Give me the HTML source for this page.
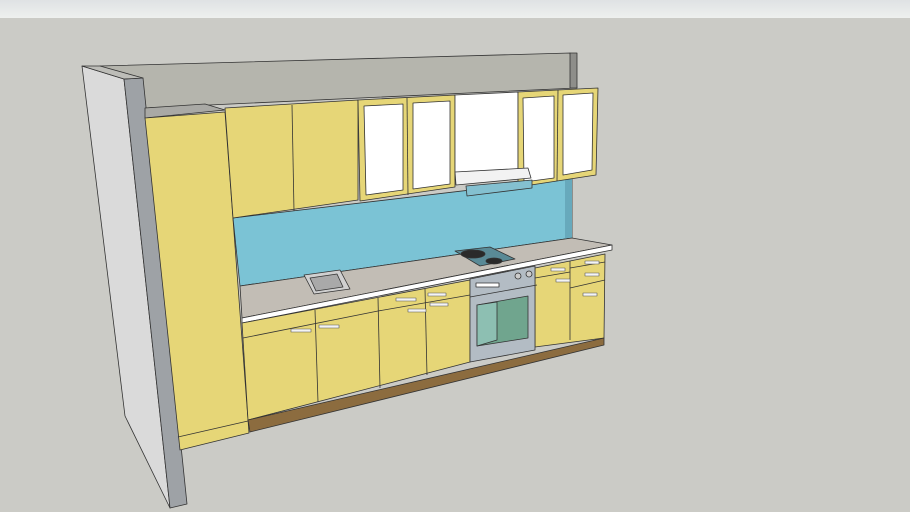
<!DOCTYPE html>
<html><head><meta charset="utf-8"><style>
html,body{margin:0;padding:0;width:910px;height:512px;overflow:hidden;background:#cbcbc6}
svg{display:block}
</style></head><body>
<svg width="910" height="512" viewBox="0 0 910 512" xmlns="http://www.w3.org/2000/svg" stroke-linejoin="round">
<defs><linearGradient id="sky" x1="0" y1="0" x2="0" y2="1"><stop offset="0" stop-color="#dfe2e4"/><stop offset="1" stop-color="#eef0ee"/></linearGradient></defs>
<rect x="0" y="0" width="910" height="18" fill="url(#sky)"/>
<rect x="0" y="18" width="910" height="494" fill="#cbcbc6"/>
<g stroke="#333" stroke-width="0.8">
<!-- soffit -->
<polygon points="100,66 570,53 577,88 145,108 124,80" fill="#b5b5ad"/>
<polygon points="570,53 577,53 577,88 570,88" fill="#8e8e8a"/>
<!-- left panel -->
<polygon points="82,66 124,79 170,508 125,416" fill="#dadada"/>
<polygon points="124,79 143,78 187,504 170,508" fill="#9ea2a6"/>
<polygon points="82,66 100,66 143,78 124,79" fill="#bdbdb8"/>
<!-- tall cabinet -->
<polygon points="145,108 205,104 225,110 145,118" fill="#a9a9a5"/>
<polygon points="145,118 225,112 249,433 180,450" fill="#e6d677"/>
<line x1="178" y1="437" x2="248" y2="421"/>
<!-- backsplash -->
<polygon points="233,218 572,178 572,238 240,286" fill="#7bc3d5"/>
<polygon points="565,179 572,178 572,238 565,238" fill="#67a9bc" stroke="none"/>
<!-- upper cabinets -->
<polygon points="225,108 358,100 358,200 233,218" fill="#e6d677"/>
<line x1="292" y1="105" x2="294" y2="211"/>
<polygon points="358,100 455,95 455,187 360,201" fill="#e6d677"/>
<polygon points="455,95 518,92 518,172 455,180" fill="#ffffff"/>
<polygon points="518,92 598,88 596,175 518,187" fill="#e6d677"/>
<line x1="407" y1="98" x2="408" y2="195"/>
<line x1="558" y1="90" x2="557" y2="181"/>
<polygon points="364,106 403,104 403,190 366,195" fill="#fff"/>
<polygon points="413,103 450,101 450,184 413,189" fill="#fff"/>
<polygon points="523,98 554,96 554,178 524,182" fill="#fff"/>
<polygon points="563,95 593,93 592,170 563,175" fill="#fff"/>
<!-- hood -->
<polygon points="455,172 528,168 531,178 456,185" fill="#f2f2f2"/>
<polygon points="466,186 532,180 532,188 467,196" fill="#84c0d0"/>
<!-- countertop -->
<polygon points="240,286 572,238 612,245 242,318" fill="#c2bdb5"/>
<polygon points="242,318 612,245 612,250 242,323" fill="#ffffff"/>
<!-- sink -->
<polygon points="304,275 340,270 350,289 314,294" fill="#d0d0d0"/>
<polygon points="310,278 337,274 343,287 316,291" fill="#a9a9a9"/>
<!-- hob -->
<polygon points="455,251 490,247 515,259 480,266" fill="#5a8a96"/>
<ellipse cx="473" cy="254" rx="12" ry="4" fill="#2a2a2a"/>
<ellipse cx="494" cy="261" rx="8" ry="3" fill="#2a2a2a"/>
<!-- base cabinets -->
<polygon points="242,323 470,280 470,362 248,420" fill="#e6d677"/>
<polygon points="535,268 605,254 604,338 535,347" fill="#e6d677"/>
<polygon points="248,420 604,338 604,345 250,432" fill="#8c6c3f"/>
<line x1="315" y1="310" x2="318" y2="402"/>
<line x1="378" y1="298" x2="380" y2="388"/>
<line x1="425" y1="289" x2="427" y2="375"/>
<line x1="570" y1="261" x2="570" y2="340"/>
<line x1="243" y1="338" x2="378" y2="311"/>
<line x1="378" y1="311" x2="470" y2="295"/>
<line x1="535" y1="278" x2="570" y2="272"/>
<line x1="570" y1="268" x2="605" y2="262"/>
<line x1="570" y1="288" x2="605" y2="280"/>
<!-- oven -->
<polygon points="470,279 535,266 535,350 470,362" fill="#b3bcc4"/>
<line x1="470" y1="297" x2="537" y2="285"/>
<polygon points="477,305 528,296 528,338 477,346" fill="#70a58e"/>
<polygon points="477,305 497,302 497,340 477,346" fill="#8dbfb2"/>
<rect x="476" y="283" width="23" height="4" fill="#fff"/>
<circle cx="518" cy="276" r="3" fill="#ccc"/><circle cx="529" cy="274" r="3" fill="#ccc"/>
</g>
<g fill="#f4f4f4" stroke="#555" stroke-width="0.6">
<rect x="291" y="329" width="20" height="3"/><rect x="319" y="325" width="20" height="3"/>
<rect x="396" y="298" width="20" height="3"/><rect x="408" y="309" width="18" height="3"/>
<rect x="428" y="293" width="18" height="3"/><rect x="430" y="303" width="18" height="3"/>
<rect x="551" y="268" width="14" height="3"/><rect x="556" y="279" width="14" height="3"/>
<rect x="585" y="261" width="14" height="3"/><rect x="585" y="273" width="14" height="3"/><rect x="583" y="293" width="14" height="3"/>
</g>
</svg>
</body></html>
